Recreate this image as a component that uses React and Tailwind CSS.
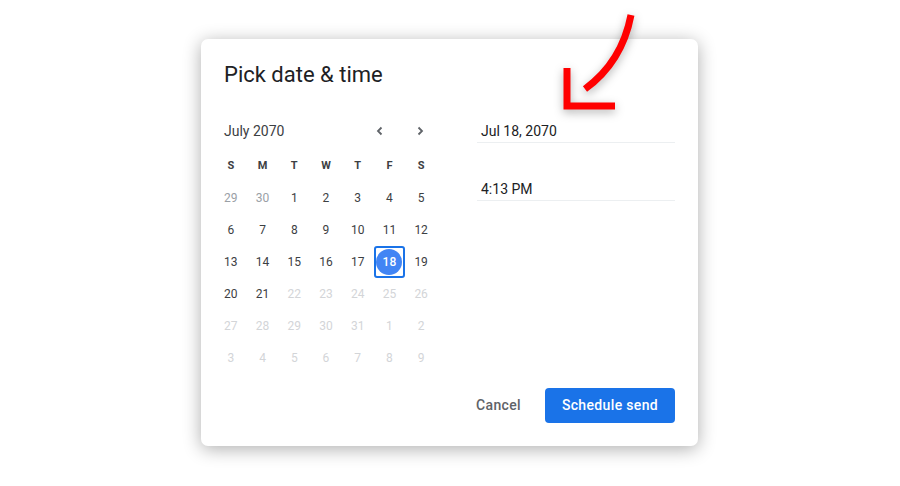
import React from 'react';

const weekDays = ['S', 'M', 'T', 'W', 'T', 'F', 'S'];

// kind: p = previous month, c = current, d = disabled, s = selected
const weeks = [
  [['29', 'p'], ['30', 'p'], ['1', 'c'], ['2', 'c'], ['3', 'c'], ['4', 'c'], ['5', 'c']],
  [['6', 'c'], ['7', 'c'], ['8', 'c'], ['9', 'c'], ['10', 'c'], ['11', 'c'], ['12', 'c']],
  [['13', 'c'], ['14', 'c'], ['15', 'c'], ['16', 'c'], ['17', 'c'], ['18', 's'], ['19', 'c']],
  [['20', 'c'], ['21', 'c'], ['22', 'd'], ['23', 'd'], ['24', 'd'], ['25', 'd'], ['26', 'd']],
  [['27', 'd'], ['28', 'd'], ['29', 'd'], ['30', 'd'], ['31', 'd'], ['1', 'd'], ['2', 'd']],
  [['3', 'd'], ['4', 'd'], ['5', 'd'], ['6', 'd'], ['7', 'd'], ['8', 'd'], ['9', 'd']],
];

const Chevron = ({ dir }) => (
  <svg width="10" height="10" viewBox="0 0 10 10" fill="none">
    <path
      d={dir === 'left' ? 'M6.5 1.5 L3 5 L6.5 8.5' : 'M3.5 1.5 L7 5 L3.5 8.5'}
      stroke="#5f6368"
      strokeWidth="1.8"
    />
  </svg>
);

const DayCell = ({ day, kind }) => {
  if (kind === 's') {
    return (
      <div className="h-8 flex items-center justify-center border-2 border-[#1a73e8] rounded-[3px]">
        <span className="w-[26px] h-[26px] rounded-full bg-[#4285f4] text-white text-[12px] font-medium flex items-center justify-center">
          {day}
        </span>
      </div>
    );
  }
  const color =
    kind === 'p' ? 'text-[#9aa0a6]' : kind === 'd' ? 'text-[#d3d5d8]' : 'text-[#3c4043]';
  return <div className={`h-8 flex items-center justify-center text-[12px] ${color}`}>{day}</div>;
};

const App = () => {
  return (
    <div className="relative w-[900px] h-[486px] bg-white font-['Roboto',_'Liberation_Sans',_sans-serif] pt-[39px]">
      <div className="ml-[201px] w-[497px] h-[407px] bg-white rounded-[7px] shadow-[0_3px_18px_rgba(0,0,0,0.32)] pl-[23px] pr-[23px] pt-[22px] pb-[23px] flex flex-col">
        <h1 className="text-[22px] leading-7 text-[#202124]">Pick date &amp; time</h1>

        <div className="flex mt-[26px] gap-10">
          <div className="w-[213px]">
            <div className="h-8 flex items-center justify-between w-[208px]">
              <span className="text-[14px] text-[#3c4043]">July 2070</span>
              <div className="flex gap-4">
                <button className="w-6 h-6 flex items-center justify-center">
                  <Chevron dir="left" />
                </button>
                <button className="w-6 h-6 flex items-center justify-center">
                  <Chevron dir="right" />
                </button>
              </div>
            </div>
            <div className="ml-[-9px] w-[222px] mt-[3px]">
              <div className="grid grid-cols-7">
                {weekDays.map((d, i) => (
                  <div key={i} className="h-8 flex items-center justify-center text-[11px] font-bold text-[#3c4043]">
                    {d}
                  </div>
                ))}
              </div>
              {weeks.map((week, wi) => (
                <div key={wi} className="grid grid-cols-7">
                  {week.map(([day, kind], di) => (
                    <DayCell key={di} day={day} kind={kind} />
                  ))}
                </div>
              ))}
            </div>
          </div>

          <div className="w-[198px] pt-[3px]">
            <div className="h-6 flex items-center px-1 border-b border-[#eceff1] box-content">
              <span className="text-[14px] text-[#202124] mt-[2px]">Jul 18, 2070</span>
            </div>
            <div className="h-6 mt-[33px] flex items-center px-1 border-b border-[#eceff1] box-content">
              <span className="text-[14px] text-[#202124] mt-[2px]">4:13 PM</span>
            </div>
          </div>
        </div>

        <div className="mt-auto flex items-center justify-end gap-6">
          <button className="text-[14px] font-medium tracking-[0.35px] text-[#5f6368]">Cancel</button>
          <button className="h-[35px] w-[130px] rounded bg-[#1a73e8] text-white text-[14px] font-medium tracking-[0.35px] flex items-center justify-center">
            Schedule send
          </button>
        </div>
      </div>

      <svg
        className="absolute left-0 top-0 pointer-events-none"
        width="900"
        height="486"
        viewBox="0 0 900 486"
        style={{ filter: 'drop-shadow(0 3px 5px rgba(0,0,0,0.3))' }}
      >
        <path d="M631 15 Q622 62 585 89" stroke="#ff0000" strokeWidth="7" fill="none" />
        <path d="M567 68 L567 106 L615 106" stroke="#ff0000" strokeWidth="7" fill="none" />
      </svg>
    </div>
  );
};

export default App;
